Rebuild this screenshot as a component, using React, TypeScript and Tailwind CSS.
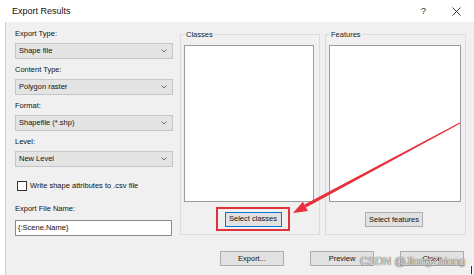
import React from "react";

const font = "font-['Liberation_Sans',Arial,sans-serif]";

function Chevron() {
  return (
    <svg width="6" height="4" viewBox="0 0 6 4" className="shrink-0">
      <path d="M0.5 0.5 L3 3 L5.5 0.5" fill="none" stroke="#606060" strokeWidth="0.9" />
    </svg>
  );
}

function Select({ value }: { value: string }) {
  return (
    <div className="flex h-[16px] w-[158px] items-center justify-between border border-[#c6c6c6] bg-[#e4e4e4] pl-[3px] pr-[5px]">
      <span className="text-[7.5px] leading-[10px] text-[#111]">{value}</span>
      <Chevron />
    </div>
  );
}

function Field({ label, value }: { label: string; value: string }) {
  return (
    <div className="flex flex-col">
      <div className="mb-[4px] h-[10px] text-[7.5px] leading-[10px] text-[#111]">{label}</div>
      <Select value={value} />
    </div>
  );
}

function Button({ label, focused }: { label: string; focused?: boolean }) {
  return (
    <div
      className={`flex h-[15px] items-center justify-center border bg-[#e1e1e1] text-[7.5px] leading-[10px] text-[#111] ${
        focused ? "border-[#0078d7]" : "border-[#adadad]"
      }`}
    >
      {label}
    </div>
  );
}

function GroupBox({ title, width, children }: { title: string; width: string; children: React.ReactNode }) {
  return (
    <div className={`relative mt-[12px] h-[201px] ${width} border border-[#dcdcdc]`}>
      <span className="absolute left-[4px] top-[-5px] bg-[#f0f0f0] px-px text-[7.5px] leading-[10px] text-[#222]">
        {title}
      </span>
      {children}
    </div>
  );
}

export default function App() {
  return (
    <div className={`relative flex h-[275px] w-[474px] flex-col overflow-hidden bg-white ${font}`}>
      {/* title bar */}
      <div className="flex h-[22px] items-center justify-between bg-white pl-[12px] pr-[13px]">
        <span className="text-[9px] leading-[12px] text-[#111]">Export Results</span>
        <div className="flex items-center gap-[26px]">
          <span className="text-[9px] leading-[12px] text-[#222]">?</span>
          <svg width="9" height="9" viewBox="0 0 9 9">
            <path d="M0.5 0.5 L8.5 8.5 M8.5 0.5 L0.5 8.5" stroke="#222" strokeWidth="0.9" />
          </svg>
        </div>
      </div>

      <div className="flex flex-1">
        <div className="w-[5px] bg-white" />
        <div className="flex flex-1 flex-col border-l border-[#cfcfcf] bg-[#f0f0f0]">
          <div className="flex items-start">
            {/* left column */}
            <div className="ml-[9px] mt-[7px] flex w-[158px] flex-col gap-[6px]">
              <Field label="Export Type:" value="Shape file" />
              <Field label="Content Type:" value="Polygon raster" />
              <Field label="Format:" value="Shapefile (*.shp)" />
              <Field label="Level:" value="New Level" />
              <div className="mt-[7px] flex h-[11px] items-center gap-[3px] pl-[2px]">
                <div className="h-[10px] w-[10px] border border-[#333] bg-white" />
                <span className="text-[7.5px] leading-[10px] text-[#111]">Write shape attributes to .csv file</span>
              </div>
              <div className="mt-[7px] h-[10px] text-[7.5px] leading-[10px] text-[#111]">Export File Name:</div>
              <div className="flex h-[16px] w-[157px] items-center border border-[#8a8a8a] bg-white pl-[2px] text-[7.5px] leading-[10px] text-[#111]">
                {"{:Scene.Name}"}
              </div>
            </div>

            {/* classes */}
            <div className="ml-[7px]">
              <GroupBox title="Classes" width="w-[140px]">
                <div className="ml-[3px] mt-[10px] h-[157px] w-[130px] border border-[#9c9c9c] bg-white" />
                <div className="ml-[35px] mt-[5px] flex h-[24px] w-[74px] items-center justify-center border-2 border-[#e0313c]">
                  <div className="w-[57px]">
                    <Button label="Select classes" focused />
                  </div>
                </div>
              </GroupBox>
            </div>

            {/* features */}
            <div className="ml-[5px]">
              <GroupBox title="Features" width="w-[141px]">
                <div className="ml-[3px] mt-[10px] h-[157px] w-[132px] border border-[#9c9c9c] bg-white" />
                <div className="ml-[39px] mt-[10px] w-[58px]">
                  <Button label="Select features" />
                </div>
              </GroupBox>
            </div>
          </div>

          {/* bottom buttons */}
          <div className="ml-[214px] mt-[15px] flex gap-[26px]">
            <div className="w-[64px]">
              <Button label="Export..." />
            </div>
            <div className="w-[64px]">
              <Button label="Preview" />
            </div>
            <div className="w-[64px]">
              <Button label="Close" />
            </div>
          </div>
        </div>
      </div>

      {/* annotation arrow */}
      <svg className="pointer-events-none absolute left-0 top-0" width="474" height="275" viewBox="0 0 474 275">
        <polygon points="460.3,123.5 459.7,122.5 304.5,204.6 306.0,207.4" fill="#e8303d" />
        <polygon points="293,213 302.9,201.8 307.9,211" fill="#e8303d" />
      </svg>

      {/* watermark */}
      <span className="pointer-events-none absolute left-[360px] top-[254px] text-[11px] leading-[14px] text-[#e2e2e2] [text-shadow:0_0_1px_#555,0_0_1px_#555]">
        CSDN @JiongZhiong
      </span>
      <div className="absolute left-[471px] top-[266px] h-[8px] w-px bg-[#333]" />
    </div>
  );
}
